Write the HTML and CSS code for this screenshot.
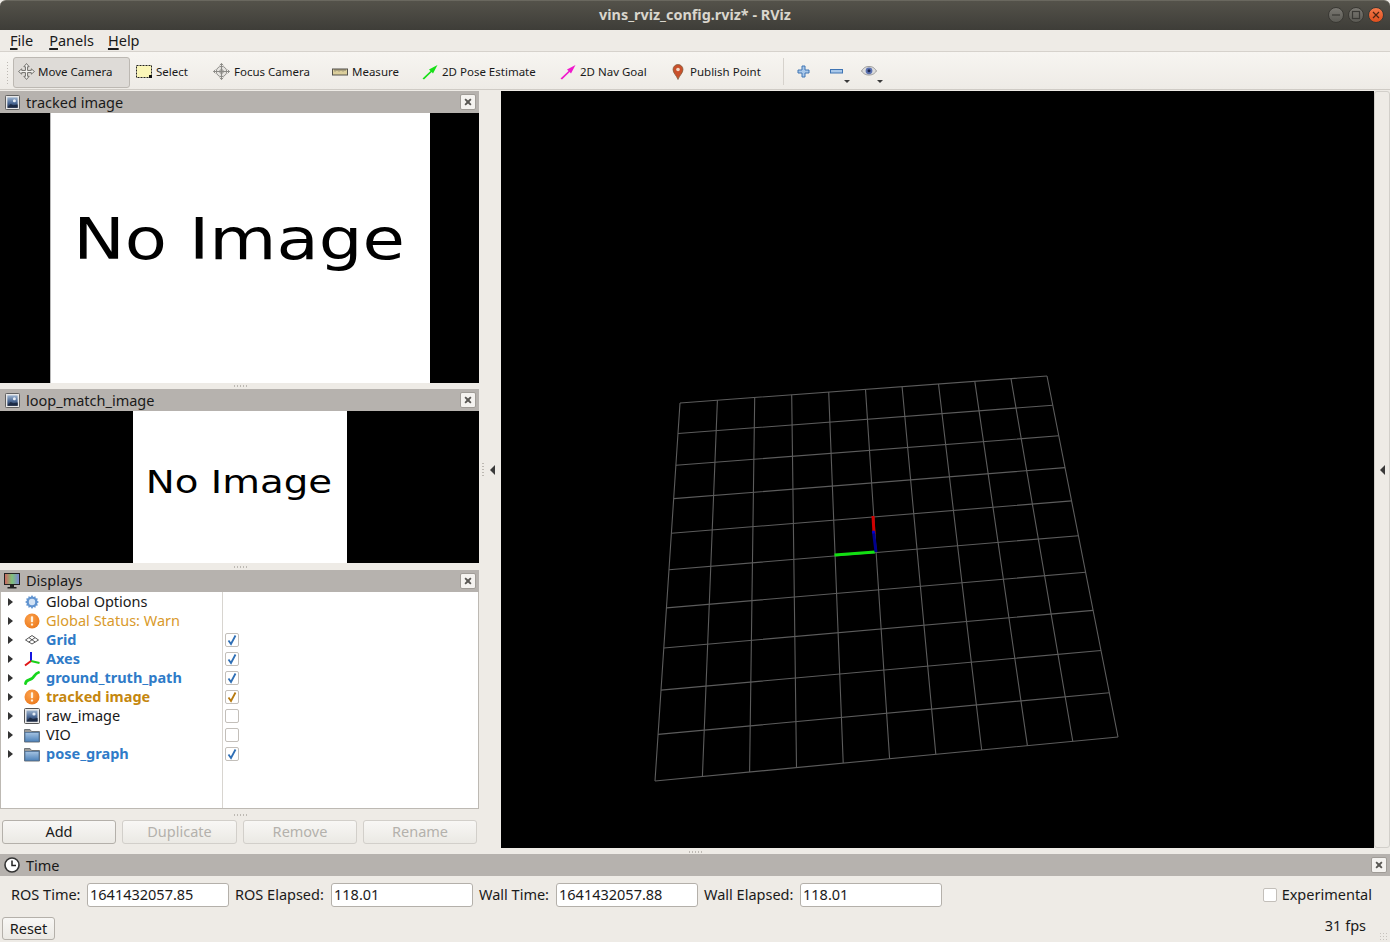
FILE: index.html
```html
<!DOCTYPE html>
<html lang="en">
<head>
<meta charset="utf-8">
<title>vins_rviz_config.rviz* - RViz</title>
<link rel="stylesheet" href="styles.css">
</head>
<body>
<svg class="defs" aria-hidden="true">
  <defs>
    <linearGradient id="gpic" x1="0" y1="0" x2="0" y2="1"><stop offset="0" stop-color="#9db4cf"/><stop offset="0.55" stop-color="#4c6a96"/><stop offset="1" stop-color="#1f2f4d"/></linearGradient>
    <linearGradient id="gfold" x1="0" y1="0" x2="0" y2="1"><stop offset="0" stop-color="#a5c3e2"/><stop offset="1" stop-color="#4f83ba"/></linearGradient>
    <linearGradient id="gscreen" x1="0" y1="0" x2="1" y2="0"><stop offset="0" stop-color="#d0605f"/><stop offset="0.5" stop-color="#7fc27a"/><stop offset="1" stop-color="#7a82d8"/></linearGradient>
    <radialGradient id="gwarn" cx="0.4" cy="0.35" r="0.7"><stop offset="0" stop-color="#fba04c"/><stop offset="1" stop-color="#ec7a1c"/></radialGradient>
    <symbol id="i-pic" viewBox="0 0 16 16"><rect x="0.5" y="0.5" width="15" height="15" rx="1" fill="#e8e8e8" stroke="#555"/><rect x="2.5" y="2.5" width="11" height="11" fill="url(#gpic)"/><circle cx="10" cy="6" r="1.6" fill="#e6edf5"/><path d="M2.5 13.5 L6 9.5 L9 11 L13.5 10 V13.5 Z" fill="#1c2a44"/></symbol>
    <symbol id="i-folder" viewBox="0 0 16 16"><path d="M0.5 2.5 H6 L7.5 4.5 H15.5 V15 H0.5 Z" fill="#9a9a98" stroke="#6f7478" stroke-width="1"/><rect x="1" y="5.5" width="14" height="9" fill="url(#gfold)" stroke="#4b7199" stroke-width="0.8"/></symbol>
    <symbol id="i-warn" viewBox="0 0 16 16"><circle cx="8" cy="8" r="7.5" fill="url(#gwarn)"/><rect x="6.9" y="3.2" width="2.2" height="6" rx="0.8" fill="#fff2df"/><rect x="6.9" y="10.4" width="2.2" height="2.2" rx="0.6" fill="#fff2df"/></symbol>
    <symbol id="i-close" viewBox="0 0 8 8"><path d="M0.5 1.7 L1.7 0.5 L4 2.6 L6.3 0.5 L7.5 1.7 L5.4 4 L7.5 6.3 L6.3 7.5 L4 5.4 L1.7 7.5 L0.5 6.3 L2.6 4 Z" fill="#5a5854"/></symbol>
    <symbol id="i-tick" viewBox="0 0 12 12"><path d="M2.5 6.5 L5 10 L9.5 1.5" fill="none" stroke="currentColor" stroke-width="1.8"/></symbol>
  </defs>
</svg>

<header class="titlebar">
  <span class="title-text">vins_rviz_config.rviz* - RViz</span>
  <div class="wm">
    <span class="wm-btn"><svg class="wm-ic" viewBox="0 0 10 10"><path d="M1 5 H9" stroke="#3a3935" stroke-width="1.2"/></svg></span>
    <span class="wm-btn"><svg class="wm-ic" viewBox="0 0 10 10"><rect x="1.5" y="1.5" width="7" height="7" fill="none" stroke="#3a3935" stroke-width="1.2"/></svg></span>
    <span class="wm-btn wm-close"><svg class="wm-ic" viewBox="0 0 10 10"><path d="M2 2 L8 8 M8 2 L2 8" stroke="#4a2412" stroke-width="1.2"/></svg></span>
  </div>
</header>

<nav class="menubar">
  <span class="menu-item menu-file"><u>F</u>ile</span>
  <span class="menu-item menu-panels"><u>P</u>anels</span>
  <span class="menu-item"><u>H</u>elp</span>
</nav>

<div class="toolbar">
  <span class="grip"></span>
  <div class="tool tool-active">
    <svg class="tool-ic wide" viewBox="0 0 16 16"><path d="M8 0.5 L10.5 3.5 H9 V7 H12.5 V5.5 L15.5 8 L12.5 10.5 V9 H9 V12.5 H10.5 L8 15.5 L5.5 12.5 H7 V9 H3.5 V10.5 L0.5 8 L3.5 5.5 V7 H7 V3.5 H5.5 Z" fill="#f2f1ee" stroke="#6d6c68" stroke-width="0.9"/></svg>
    <span>Move Camera</span>
  </div>
  <div class="tool">
    <svg class="tool-ic" viewBox="0 0 16 16"><rect x="0.5" y="1.5" width="15" height="12" fill="#fbf6b8" stroke="#222" stroke-dasharray="2 1"/><rect x="13" y="11" width="3" height="3" fill="#111"/></svg>
    <span>Select</span>
  </div>
  <div class="tool">
    <svg class="tool-ic wide" viewBox="0 0 18 18"><circle cx="9" cy="9" r="5.5" fill="#e6e4e0" stroke="#8b8a86"/><circle cx="9" cy="9" r="2" fill="none" stroke="#8b8a86"/><path d="M9 0.5 V17.5 M0.5 9 H17.5" stroke="#8b8a86" stroke-width="1.2"/><path d="M7 2.5 L9 0.5 L11 2.5 M7 15.5 L9 17.5 L11 15.5 M2.5 7 L0.5 9 L2.5 11 M15.5 7 L17.5 9 L15.5 11" fill="none" stroke="#8b8a86"/></svg>
    <span>Focus Camera</span>
  </div>
  <div class="tool">
    <svg class="tool-ic" viewBox="0 0 16 16"><rect x="0.5" y="5" width="15" height="6" fill="#dccf9c" stroke="#54524c"/><path d="M3 5 V7.5 M5 5 V7 M7 5 V7.5 M9 5 V7 M11 5 V7.5 M13 5 V7" stroke="#54524c" stroke-width="0.7"/></svg>
    <span>Measure</span>
  </div>
  <div class="tool">
    <svg class="tool-ic" viewBox="0 0 16 16"><path d="M0.5 14.5 L8.5 7 L7 5.5 L15.5 1 L11 9.5 L9.7 8 L2 15.5 Z" fill="#17e017"/></svg>
    <span>2D Pose Estimate</span>
  </div>
  <div class="tool">
    <svg class="tool-ic" viewBox="0 0 16 16"><path d="M0.5 14.5 L8.5 7 L7 5.5 L15.5 1 L11 9.5 L9.7 8 L2 15.5 Z" fill="#f019cc"/></svg>
    <span>2D Nav Goal</span>
  </div>
  <div class="tool">
    <svg class="tool-ic" viewBox="0 0 16 16"><path d="M8 15.5 C6.5 11.5 3 9 3 5.5 A5 5 0 0 1 13 5.5 C13 9 9.5 11.5 8 15.5 Z" fill="#c9502b" stroke="#7a5a3a" stroke-width="0.7"/><circle cx="8" cy="5.5" r="1.8" fill="#f0d9c8"/></svg>
    <span>Publish Point</span>
  </div>
  <span class="tool-sep"></span>
  <svg class="mini-ic mini-plus" viewBox="0 0 13 13"><path d="M5 1 H8 V5 H12 V8 H8 V12 H5 V8 H1 V5 H5 Z" fill="#a9c8ea" stroke="#3f74b3"/></svg>
  <svg class="mini-ic mini-minus" viewBox="0 0 13 13"><rect x="0.5" y="4.5" width="12" height="3.5" fill="#a9c8ea" stroke="#3f74b3"/></svg>
  <span class="caret caret-a"></span>
  <svg class="mini-ic mini-eye" viewBox="0 0 16 13"><path d="M0.5 6 C3 2 5.5 1.5 8 1.5 C10.5 1.5 13 2 15.5 6 C13 9.5 10.5 10 8 10 C5.5 10 3 9.5 0.5 6 Z" fill="#dcdcdc" stroke="#9a9a9a"/><circle cx="8" cy="5.8" r="3.4" fill="#5a70b0"/><circle cx="8" cy="5.8" r="1.5" fill="#1d2850"/></svg>
  <span class="caret caret-b"></span>
</div>

<main class="workspace">
  <section class="left-col">
    <div class="dock dock-a">
      <div class="dock-head">
        <svg class="head-ic head-pic"><use href="#i-pic"/></svg><span class="head-label">tracked image</span>
        <span class="dock-close"><svg class="close-ic"><use href="#i-close"/></svg></span>
      </div>
      <div class="no-image big"><div class="white-pane pane-big"><span>No Image</span></div></div>
    </div>
    <div class="split-h"><span class="dots"></span></div>
    <div class="dock dock-b">
      <div class="dock-head">
        <svg class="head-ic head-pic"><use href="#i-pic"/></svg><span class="head-label">loop_match_image</span>
        <span class="dock-close"><svg class="close-ic"><use href="#i-close"/></svg></span>
      </div>
      <div class="no-image small"><div class="white-pane pane-small"><span>No Image</span></div></div>
    </div>
    <div class="split-h split-b"><span class="dots"></span></div>
    <div class="dock dock-c">
      <div class="dock-head">
        <svg class="head-ic" viewBox="0 0 16 16"><rect x="0.5" y="0.5" width="15" height="11" fill="url(#gscreen)" stroke="#222"/><rect x="6" y="12" width="4" height="2" fill="#222"/><rect x="3.5" y="14" width="9" height="1.5" fill="#222"/></svg><span class="head-label label-up">Displays</span>
        <span class="dock-close"><svg class="close-ic"><use href="#i-close"/></svg></span>
      </div>
      <div class="tree">
        <div class="tree-names">
          <div class="row"><span class="arrow"></span><svg class="row-ic" viewBox="0 0 16 16"><path d="M8 1 L9.3 2.9 L11.5 2.2 L11.7 4.3 L13.8 4.5 L13.1 6.7 L15 8 L13.1 9.3 L13.8 11.5 L11.7 11.7 L11.5 13.8 L9.3 13.1 L8 15 L6.7 13.1 L4.5 13.8 L4.3 11.7 L2.2 11.5 L2.9 9.3 L1 8 L2.9 6.7 L2.2 4.5 L4.3 4.3 L4.5 2.2 L6.7 2.9 Z" fill="#5f93d0"/><circle cx="8" cy="8" r="3.2" fill="#d3e3f5"/></svg><span class="row-text">Global Options</span></div>
          <div class="row warn-light"><span class="arrow"></span><svg class="row-ic"><use href="#i-warn"/></svg><span class="row-text">Global Status: Warn</span></div>
          <div class="row on"><span class="arrow"></span><svg class="row-ic" viewBox="0 0 16 16"><path d="M8 3.5 L14.5 8 L8 12 L1.5 8 Z M5 5.7 L11.2 10 M11 5.7 L4.8 10" fill="none" stroke="#444" stroke-width="0.9"/></svg><span class="row-text">Grid</span></div>
          <div class="row on"><span class="arrow"></span><svg class="row-ic" viewBox="0 0 16 16"><path d="M7 10 V1" stroke="#1616e0" stroke-width="2"/><path d="M7 10 L15.5 12" stroke="#17d017" stroke-width="2"/><path d="M7 10 L1 14.5" stroke="#e01616" stroke-width="2"/></svg><span class="row-text">Axes</span></div>
          <div class="row on"><span class="arrow"></span><svg class="row-ic" viewBox="0 0 16 16"><path d="M1.5 13.5 C2 9.5 5 10.5 8 8.5 C10.5 7 10.5 3.5 14.5 2.5" fill="none" stroke="#17d61d" stroke-width="2.8" stroke-linecap="round"/></svg><span class="row-text">ground_truth_path</span></div>
          <div class="row warn"><span class="arrow"></span><svg class="row-ic"><use href="#i-warn"/></svg><span class="row-text">tracked image</span></div>
          <div class="row"><span class="arrow"></span><svg class="row-ic"><use href="#i-pic"/></svg><span class="row-text">raw_image</span></div>
          <div class="row"><span class="arrow"></span><svg class="row-ic"><use href="#i-folder"/></svg><span class="row-text">VIO</span></div>
          <div class="row on"><span class="arrow"></span><svg class="row-ic"><use href="#i-folder"/></svg><span class="row-text">pose_graph</span></div>
        </div>
        <div class="tree-checks">
          <div class="row-c"></div>
          <div class="row-c"></div>
          <div class="row-c"><span class="check blue"><svg class="tick"><use href="#i-tick"/></svg></span></div>
          <div class="row-c"><span class="check blue"><svg class="tick"><use href="#i-tick"/></svg></span></div>
          <div class="row-c"><span class="check blue"><svg class="tick"><use href="#i-tick"/></svg></span></div>
          <div class="row-c"><span class="check amber"><svg class="tick"><use href="#i-tick"/></svg></span></div>
          <div class="row-c"><span class="check"></span></div>
          <div class="row-c"><span class="check"></span></div>
          <div class="row-c"><span class="check blue"><svg class="tick"><use href="#i-tick"/></svg></span></div>
        </div>
      </div>
      <div class="split-h split-tree"><span class="dots"></span></div>
      <div class="tree-buttons">
        <span class="btn">Add</span>
        <span class="btn off">Duplicate</span>
        <span class="btn off">Remove</span>
        <span class="btn off">Rename</span>
      </div>
    </div>
  </section>

  <div class="v-handle"><span class="v-dots"></span><span class="tri"></span></div>

  <section class="view">
    <svg class="scene" viewBox="0 0 873 757" preserveAspectRatio="none">
      <g class="grid" transform="translate(-501 -91)">
        <path d="M680 403L1047 376M678 433.5L1052.8 405.3M675.9 465.3L1058.8 435.8M673.7 498.6L1065 467.6M671.4 533.3L1071.6 500.9M669 569.8L1078.4 535.7M666.5 607.9L1085.6 572.2M663.8 648L1093.1 610.4M661 690.1L1101 650.5M658.1 734.4L1109.3 692.7M655 781L1118 737"/>
        <path d="M680 403L655 781M717.4 400.3L702.4 776.5M754.7 397.5L749.6 772M791.7 394.8L796.5 767.5M828.7 392.1L843.2 763.1M865.5 389.4L889.6 758.7M902.1 386.7L935.8 754.3M938.5 384L981.7 750M974.8 381.3L1027.4 745.6M1011 378.7L1072.8 741.3M1047 376L1118 737"/>
      </g>
      <g transform="translate(-501 -91)" fill="none" stroke-width="3">
        <path d="M834.5 555 L875 552" stroke="#12e012"/>
        <path d="M873 516 L874 534" stroke="#d00000"/>
        <path d="M873.5 532 L876 552" stroke="#00008f"/>
        <circle cx="873.5" cy="532" r="1.6" fill="#0000d0" stroke="none"/>
      </g>
    </svg>
  </section>

  <div class="r-handle"><span class="tri"></span></div>
</main>

<div class="split-h split-main"><span class="dots"></span></div>

<footer class="time-panel">
  <div class="dock-head time-head">
    <svg class="head-ic" viewBox="0 0 16 16"><circle cx="8" cy="8" r="7" fill="#fff" stroke="#333" stroke-width="1.6"/><path d="M8 3.5 V8.5 H12" fill="none" stroke="#222" stroke-width="1.5"/></svg><span class="head-label">Time</span>
    <span class="dock-close"><svg class="close-ic"><use href="#i-close"/></svg></span>
  </div>
  <div class="time-row">
    <span class="t-label">ROS Time:</span><span class="t-input">1641432057.85</span>
    <span class="t-label">ROS Elapsed:</span><span class="t-input">118.01</span>
    <span class="t-label">Wall Time:</span><span class="t-input">1641432057.88</span>
    <span class="t-label">Wall Elapsed:</span><span class="t-input">118.01</span>
    <span class="exp"><span class="check"></span><span class="t-label">Experimental</span></span>
  </div>
  <div class="status-row">
    <span class="btn reset">Reset</span>
    <span class="fps">31 fps</span>
    <span class="size-grip"></span>
  </div>
</footer>
</body>
</html>
```
FILE: styles.css
```css
* { box-sizing: border-box; }
html, body { margin: 0; padding: 0; }
body {
  width: 1390px;
  height: 942px;
  overflow: hidden;
  background: #eeebe6;
  color: #1a1a1a;
  font-family: "Noto Sans", "DejaVu Sans", sans-serif;
  font-size: 14px;
  position: relative;
}
.defs { position: absolute; width: 0; height: 0; }

/* title bar */
.titlebar {
  height: 30px;
  background: linear-gradient(#54524a, #3e3d38);
  border-top: 1px solid #6a685f;
  border-radius: 6px 6px 0 0;
  display: flex;
  align-items: center;
  justify-content: center;
  padding-bottom: 2px;
  position: relative;
}
.title-text { color: #d9d6cd; font-size: 14.4px; font-weight: 700; }
.wm { position: absolute; right: 6px; top: 6px; display: flex; gap: 4px; }
.wm-btn {
  width: 16px; height: 16px; border-radius: 50%;
  background: linear-gradient(#7a7872, #5b5a54);
  border: 1px solid #3a3934;
  display: flex; align-items: center; justify-content: center;
}
.wm-close { background: linear-gradient(#f5794a, #de4f1e); }
.wm-ic { width: 10px; height: 10px; }

/* menu */
.menubar {
  height: 22px;
  display: flex;
  padding: 0 0 2px 10px;
  gap: 15px;
  align-items: center;
  border-bottom: 1px solid #d6d2cc;
  font-size: 14.5px;
}
.menu-file { margin-right: 1px; }
.menu-panels { margin-right: -1px; }
.menu-item u { text-decoration-thickness: 2px; text-underline-offset: 2px; }

/* toolbar */
.toolbar {
  height: 38px;
  background: linear-gradient(#f7f5f1, #eeebe6);
  border-bottom: 1px solid #cfcbc5;
  display: grid;
  grid-template-columns: 13px 117px 6px 71px 6px 113px 6px 84px 6px 132px 6px 104px 6px 107px 6px 8px 6px 13px 20px 13px 18px 16px 1fr;
  grid-auto-flow: column;
  padding-top: 4px;
  align-items: center;
  position: relative;
}
.grip {
  width: 3px; height: 24px; margin-left: 6px;
  background-image: radial-gradient(circle, #bdb9b3 0.8px, transparent 1px);
  background-size: 3px 3px;
}
.tool { display: flex; align-items: center; gap: 4px; height: 31px; padding-bottom: 2px; font-size: 11.5px; white-space: nowrap; grid-row: 1; }
.tool-active {
  background: #dedbd7;
  border: 1px solid #bcb8b2;
  border-radius: 3px;
  padding-left: 4px;
  gap: 3px;
}
.tool-ic { width: 16px; height: 16px; flex: none; }
.tool-ic.wide { width: 17px; height: 17px; }
.toolbar > :nth-child(2) { grid-column: 2; }
.toolbar > :nth-child(3) { grid-column: 4; }
.toolbar > :nth-child(4) { grid-column: 6; }
.toolbar > :nth-child(5) { grid-column: 8; }
.toolbar > :nth-child(6) { grid-column: 10; }
.toolbar > :nth-child(7) { grid-column: 12; }
.toolbar > :nth-child(8) { grid-column: 14; }
.tool-sep { grid-column: 15 / span 1; width: 1px; height: 27px; background: #d6d2cc; margin: 0 0 2px 6px; }
.mini-ic { width: 13px; height: 13px; grid-row: 1; margin-bottom: 2px; }
.mini-plus { grid-column: 18; }
.mini-minus { grid-column: 20; }
.mini-eye { grid-column: 22; width: 16px; }
.caret { position: absolute; top: 28px; width: 0; height: 0; border-left: 3px solid transparent; border-right: 3px solid transparent; border-top: 3px solid #3a3a3a; }
.caret-a { left: 844px; }
.caret-b { left: 877px; }

/* workspace */
.workspace {
  display: grid;
  grid-template-columns: 479px 22px 873px 16px;
  height: 758px;
  margin-top: 1px;
}
.left-col { display: flex; flex-direction: column; height: 758px; }
.dock { display: flex; flex-direction: column; }
.dock-a { height: 292px; }
.dock-b { height: 174px; }
.dock-c { flex: 1; }
.dock-head {
  height: 22px;
  flex: none;
  background: #b6b2ae;
  display: flex;
  align-items: center;
  padding: 0 3px 0 4px;
}
.head-ic { width: 16px; height: 16px; flex: none; }
.head-pic { width: 15px; height: 15px; margin-left: 1px; }
.head-label { margin-left: 6px; font-size: 14.5px; }
.label-up { padding-bottom: 2px; }
.dock-close {
  margin-left: auto;
  width: 16px; height: 16px;
  background: #f5f3f0;
  border: 1px solid #a09c97;
  border-radius: 2px;
  display: flex; align-items: center; justify-content: center;
}
.close-ic { width: 8px; height: 8px; }

.no-image { flex: 1; background: #000; display: flex; }
.big { padding-left: 50px; }
.small { padding-left: 133px; }
.white-pane { background: #fff; display: flex; align-items: center; justify-content: center; color: #000; font-family: "DejaVu Sans", sans-serif; white-space: nowrap; padding-right: 2px; }
.pane-big { width: 380px; font-size: 57px; padding-bottom: 19px; border-left: 1px solid #b8b8b8; }
.pane-small { width: 214px; font-size: 32px; padding-bottom: 11px; }
.white-pane span { display: block; transform: scaleX(1.21); }

.split-h { height: 6px; flex: none; display: flex; justify-content: center; align-items: center; padding-left: 3px; }
.split-b { height: 7px; }
.dots { width: 16px; height: 2px; background-image: radial-gradient(circle, #bdb9b3 0.7px, transparent 1px); background-size: 3px 2px; }

/* tree */
.tree { height: 217px; flex: none; display: grid; grid-template-columns: 222px 1fr; background: #fff; border: 1px solid #bdb9b3; border-top: 0; }
.tree-names { border-right: 1px solid #d8d5d0; }
.row { height: 19px; display: flex; align-items: center; font-size: 14.5px; white-space: nowrap; }
.row-text { padding-bottom: 2px; }
.arrow { width: 0; height: 0; margin-left: 7px; border-top: 4.5px solid transparent; border-bottom: 4.5px solid transparent; border-left: 5px solid #333; }
.row-ic { width: 16px; height: 16px; margin-left: 11px; margin-right: 6px; flex: none; }
.on { color: #2f7bc8; font-weight: 700; }
.warn { color: #c5870f; font-weight: 700; }
.warn-light { color: #d99a2b; }
.row-c { height: 19px; display: flex; align-items: center; padding-left: 2px; }
.check {
  width: 14px; height: 14px;
  border: 1px solid #c3bfba;
  border-radius: 2px;
  background: #fff;
  display: inline-flex; align-items: center; justify-content: center;
  flex: none;
}
.tick { width: 12px; height: 12px; }
.blue { color: #2f6fb5; }
.amber { color: #b77a10; }
.split-tree { height: 11px; }
.tree-buttons { display: grid; grid-template-columns: 114px 115px 114px 114px; gap: 6px; padding-left: 2px; }
.btn {
  height: 24px;
  border: 1px solid #b4b0aa;
  border-radius: 3px;
  background: linear-gradient(#f8f7f5, #ebe9e4);
  display: flex; align-items: center; justify-content: center;
  padding-bottom: 2px;
  font-size: 14.5px;
}
.btn.off { color: #b4b1ac; border-color: #d2cfca; }

/* view + handles */
.v-handle { display: flex; align-items: center; justify-content: flex-start; }
.v-dots { width: 2px; height: 16px; margin-left: 3px; background-image: radial-gradient(circle, #bdb9b3 0.7px, transparent 1px); background-size: 2px 3px; }
.v-handle .tri { margin-left: 6px; }
.tri { width: 0; height: 0; border-top: 5px solid transparent; border-bottom: 5px solid transparent; border-right: 5px solid #3a3a3a; }
.view { background: #000; height: 757px; }
.scene { display: block; width: 873px; height: 757px; }
.grid { fill: none; stroke: #5c5c5c; stroke-width: 1.1; }
.r-handle {
  background: #eeebe6;
  border: 1px solid #d2cfca;
  border-radius: 3px;
  height: 757px;
  display: flex; align-items: center; justify-content: center;
}

.split-main { height: 5px; padding-left: 2px; }
.time-head { height: 22px; }

/* time panel */
.time-row {
  display: grid;
  grid-template-columns: 70px 142px 90px 142px 71px 142px 90px 142px 1fr;
  column-gap: 6px;
  padding: 7px 18px 0 11px;
  align-items: center;
  font-size: 14.5px;
}
.t-label { white-space: nowrap; padding-bottom: 2px; }
.t-input {
  height: 24px;
  background: #fff;
  border: 1px solid #b4b0aa;
  border-radius: 3px;
  padding: 0 0 2px 2px;
  display: flex; align-items: center;
}
.exp { display: flex; align-items: center; justify-content: flex-end; gap: 5px; }
.status-row { display: flex; align-items: flex-start; padding: 10px 24px 0 2px; position: relative; }
.reset { width: 53px; height: 23px; }
.fps { margin-left: auto; font-size: 14.5px; line-height: 16px; }
.size-grip { position: absolute; right: 1px; bottom: -2px; width: 10px; height: 10px; background-image: radial-gradient(circle, #c6c2bd 0.7px, transparent 1px); background-size: 3px 3px; }
```
